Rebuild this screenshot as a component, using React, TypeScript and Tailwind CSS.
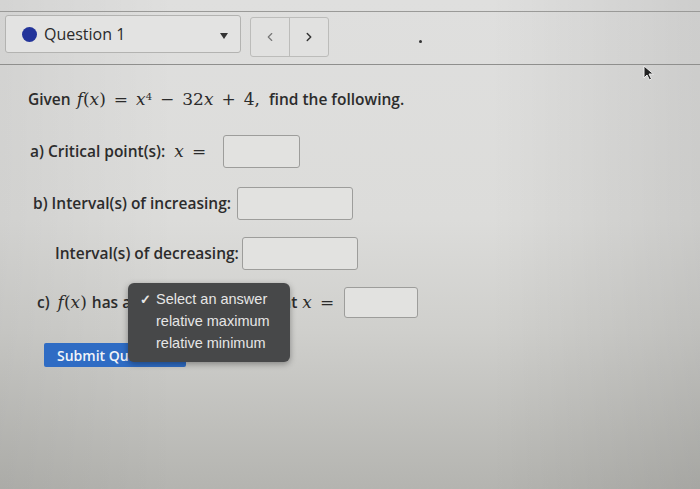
import { ChevronLeft, ChevronRight } from "lucide-react";

// ── Small helpers ─────────────────────────────────────────────────────────────

function M({ children }: { children: React.ReactNode }) {
  // MathJax-ish math text
  return <span className="inline-flex items-baseline font-['DejaVu_Serif',serif] text-[17px] font-normal text-[#2b2b2b]">{children}</span>;
}

function V({ children }: { children: React.ReactNode }) {
  return <i className="italic">{children}</i>;
}

function Op({ children }: { children: React.ReactNode }) {
  return <span className="mx-[8px]">{children}</span>;
}

function AnswerBox({ w, h = "h-[33px]" }: { w: string; h?: string }) {
  return <div className={`${w} ${h} rounded-[3px] border border-[#9d9d9b] bg-[#e2e2e0]`} />;
}

// ── Page ──────────────────────────────────────────────────────────────────────

export default function App() {
  return (
    <div className="relative h-[489px] w-[700px] overflow-hidden font-['Open_Sans',sans-serif] text-[15.5px] font-semibold text-[#2c2c2c] bg-[linear-gradient(90deg,rgba(0,0,0,0.05),rgba(0,0,0,0)_25%,rgba(0,0,0,0)_70%,rgba(0,0,0,0.08)),linear-gradient(180deg,#dfdfde_0%,#dcdcda_45%,#cfcfcc_68%,#b4b4b0_100%)]">

      {/* Top rule */}
      <div className="mt-[11px] h-px w-full bg-[#9a9a98]" />

      {/* Question header */}
      <div className="flex items-start pl-[5px] pt-[3px]">
        <div className="flex h-[38px] w-[236px] items-center rounded-[3px] border border-[#b3b3b1] bg-[#e3e3e2] pl-[16px] pr-[12px]">
          <span className="h-[15px] w-[15px] rounded-full bg-[#23349a]" />
          <span className="ml-[7px] text-[16px] font-normal text-[#2a2a2a]">Question 1</span>
          <span className="ml-auto mt-[4px] h-0 w-0 border-x-[4px] border-t-[6px] border-x-transparent border-t-[#333]" />
        </div>
        <div className="ml-[9px] mt-[2px] flex h-[40px] rounded-[3px] border border-[#bcbcba] bg-[#e1e1e0]">
          <button className="flex w-[39px] items-center justify-center border-r border-[#bcbcba] text-[#777]">
            <ChevronLeft className="h-[14px] w-[14px]" strokeWidth={2} />
          </button>
          <button className="flex w-[38px] items-center justify-center text-[#333]">
            <ChevronRight className="h-[14px] w-[14px]" strokeWidth={2.5} />
          </button>
        </div>
      </div>

      {/* Header rule */}
      <div className="mt-[7px] h-px w-full bg-[#8f8f8d]" />

      {/* Question body */}
      <div className="flex flex-col">
        <p className="mt-[22px] flex h-[24px] items-baseline pl-[28px]">
          <span>Given</span>
          <span className="ml-[6px]">
            <M>
              <V>f</V>(<V>x</V>)<Op>=</Op><V>x</V><sup className="text-[10px]">4</sup><Op>−</Op>32<V>x</V><Op>+</Op>4,
            </M>
          </span>
          <span className="ml-[9px]">find the following.</span>
        </p>

        <div className="mt-[24px] flex h-[33px] items-center pl-[30px]">
          <span>a) Critical point(s):</span>
          <span className="ml-[9px]"><M><V>x</V><Op>=</Op></M></span>
          <div className="ml-[9px]"><AnswerBox w="w-[77px]" /></div>
        </div>

        <div className="mt-[19px] flex h-[33px] items-center pl-[33px]">
          <span>b) Interval(s) of increasing:</span>
          <div className="ml-[6px]"><AnswerBox w="w-[116px]" /></div>
        </div>

        <div className="mt-[17px] flex h-[33px] items-center pl-[55px]">
          <span>Interval(s) of decreasing:</span>
          <div className="ml-[3px]"><AnswerBox w="w-[116px]" /></div>
        </div>

        <div className="mt-[17px] flex h-[31px] items-center pl-[37px]">
          <span>c)</span>
          <span className="ml-[8px]"><M><V>f</V>(<V>x</V>)</M></span>
          <span className="ml-[5px]">has a</span>
          <div className="ml-[4px] h-[26px] w-[148px] rounded-[3px] border border-[#aaa] bg-[#e2e2e0]" />
          <span className="-ml-px">at</span>
          <span className="ml-[5px]"><M><V>x</V><Op>=</Op></M></span>
          <div className="ml-[2px]"><AnswerBox w="w-[74px]" h="h-[31px]" /></div>
        </div>

        <div className="mt-[25px] pl-[44px]">
          <button className="h-[24px] w-[142px] rounded-[2px] bg-[#2f6cc4] pl-[13px] text-left text-[14px] font-semibold text-[#f2f4f8]">
            Submit Question
          </button>
        </div>
      </div>

      {/* Open select menu */}
      <div className="absolute left-[128px] top-[283px] z-10 flex h-[79px] w-[162px] flex-col rounded-[6px] bg-[#474849] pt-[6px] font-['Liberation_Sans',sans-serif] text-[14.5px] font-normal text-[#e6e6e6] shadow-[0_2px_6px_rgba(0,0,0,0.35)]">
        <div className="flex h-[22px] items-center pl-[12px]">
          <span className="w-[16px] text-[13px] font-bold">✓</span>
          <span>Select an answer</span>
        </div>
        <div className="flex h-[22px] items-center pl-[28px]">relative maximum</div>
        <div className="flex h-[22px] items-center pl-[28px]">relative minimum</div>
      </div>

      {/* Mouse pointer from the photo */}
      <svg className="absolute left-[643px] top-[65px]" width="12" height="16" viewBox="0 0 12 16">
        <path d="M1 1 L1 13 L4 10 L6.5 15 L8.5 14 L6 9 L10.5 9 Z" fill="#222" stroke="#eee" strokeWidth="1" />
      </svg>
      <span className="absolute left-[419px] top-[40px] h-[3px] w-[3px] rounded-full bg-[#333]" />
    </div>
  );
}
